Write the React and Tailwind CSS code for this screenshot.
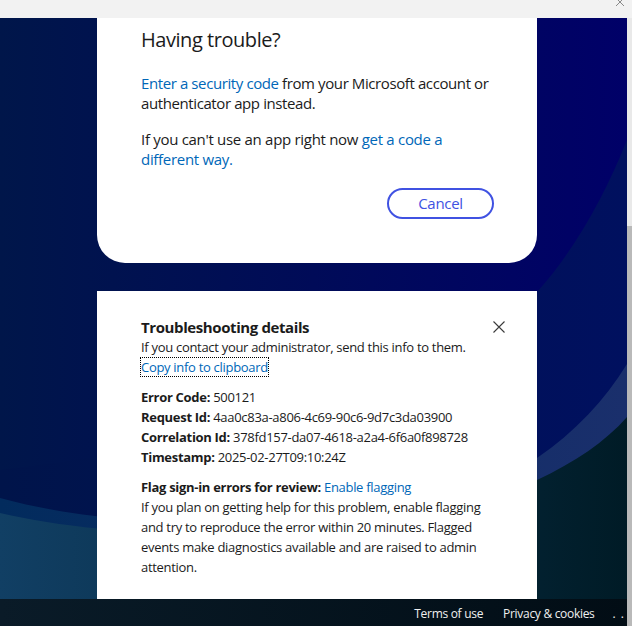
import React from 'react';

const FONT = "font-['Segoe_UI','Open_Sans',sans-serif]";

function Backdrop() {
  return (
    <svg
      className="absolute inset-0 w-full h-full"
      viewBox="0 18 627 608"
      preserveAspectRatio="none"
    >
      <defs>
        <linearGradient id="base" x1="0" x2="1" y1="0" y2="0">
          <stop offset="0" stopColor="#00164a" />
          <stop offset="0.5" stopColor="#000b58" />
          <stop offset="1" stopColor="#000068" />
        </linearGradient>
        <linearGradient id="sweep" x1="0" x2="1" y1="0" y2="0">
          <stop offset="0" stopColor="#00144a" />
          <stop offset="1" stopColor="#00105f" />
        </linearGradient>
        <linearGradient id="band" x1="0" x2="1" y1="0" y2="0">
          <stop offset="0" stopColor="#022b5d" />
          <stop offset="1" stopColor="#1a2f6c" />
        </linearGradient>
        <linearGradient id="floor" x1="0" x2="1" y1="0" y2="0">
          <stop offset="0" stopColor="#113f64" />
          <stop offset="0.6" stopColor="#062a40" />
          <stop offset="1" stopColor="#001b26" />
        </linearGradient>
      </defs>
      <rect x="0" y="18" width="627" height="608" fill="url(#base)" />
      <path d="M627 140 C605 195 575 250 537 292 C470 360 330 430 0 470 L0 626 L627 626 Z" fill="url(#sweep)" />
      <path d="M0 498 C150 540 420 530 537 458 C575 432 605 400 627 364 L627 626 L0 626 Z" fill="url(#band)" />
      <path d="M0 513 C150 548 400 540 537 480 C575 462 605 442 627 417 L627 626 L0 626 Z" fill="url(#floor)" />
    </svg>
  );
}

function Scrollbar() {
  return (
    <div className="w-[5px] shrink-0 flex flex-col">
      <div className="h-[208px] bg-[#e9e9e9]" />
      <div className="flex-1 bg-[#b9b9b9]" />
    </div>
  );
}

function Label({ children }) {
  return <span className="font-bold">{children}</span>;
}

export default function App() {
  return (
    <div className={`w-[632px] h-[626px] flex flex-col overflow-hidden text-[#1b1b1b] tracking-[-0.3px] ${FONT}`}>
      {/* window strip */}
      <div className="h-[18px] shrink-0 flex justify-end bg-[#f2f2f2] overflow-hidden">
        <svg className="-mt-[3px] mr-[7px]" width="10" height="10" viewBox="0 0 10 10">
          <path d="M1 1 L9 9 M9 1 L1 9" stroke="#8a8a8a" strokeWidth="1" />
        </svg>
      </div>

      <div className="flex-1 flex min-h-0">
        <div className="relative flex-1 flex flex-col min-w-0">
          <Backdrop />

          <main className="relative flex-1 flex flex-col pl-[97px] min-h-0">
            {/* having trouble card */}
            <section className="w-[440px] bg-white rounded-b-[28px] px-[44px] pt-[8px] pb-[44px]">
              <h1 className="text-[20px] leading-[28px] font-normal tracking-[-0.45px] mb-[19px]">Having trouble?</h1>
              <p className="text-[15px] leading-[20px] tracking-[-0.4px] whitespace-nowrap mb-[16px]">
                <a className="text-[#0067b8]">Enter a security code</a> from your Microsoft account or
                <br />
                authenticator app instead.
              </p>
              <p className="text-[15px] leading-[20px] whitespace-nowrap">
                If you can't use an app right now <a className="text-[#0067b8]">get a code a</a>
                <br />
                <a className="text-[#0067b8]">different way.</a>
              </p>
              <div className="flex justify-end mt-[19px] -mr-px">
                <button className="w-[107px] h-[31px] rounded-full border-2 border-[#4052e2] text-[#4052e2] text-[15px] leading-none">
                  Cancel
                </button>
              </div>
            </section>

            {/* troubleshooting card */}
            <section className="w-[440px] flex-1 mt-[28px] bg-white px-[44px] pt-[26px] text-[13px] leading-[20px] whitespace-nowrap">
              <div className="flex items-center justify-between -mr-[12px]">
                <h2 className="text-[15px] leading-[20px] font-bold tracking-[-0.4px]">Troubleshooting details</h2>
                <svg width="12" height="12" viewBox="0 0 12 12">
                  <path d="M0.5 0.5 L11.5 11.5 M11.5 0.5 L0.5 11.5" stroke="#3b3b3b" strokeWidth="1.1" />
                </svg>
              </div>
              <p>If you contact your administrator, send this info to them.</p>
              <p>
                <a className="inline-block leading-[18px] text-[#0067b8] outline-1 outline-dotted outline-black">
                  Copy info to clipboard
                </a>
              </p>

              <div className="mt-[10px]">
                <div><Label>Error Code:</Label> 500121</div>
                <div><Label>Request Id:</Label> 4aa0c83a-a806-4c69-90c6-9d7c3da03900</div>
                <div><Label>Correlation Id:</Label> 378fd157-da07-4618-a2a4-6f6a0f898728</div>
                <div><Label>Timestamp:</Label> 2025-02-27T09:10:24Z</div>
              </div>

              <div className="mt-[10px]">
                <div>
                  <Label>Flag sign-in errors for review:</Label>{' '}
                  <a className="text-[#0067b8]">Enable flagging</a>
                </div>
                <p>
                  If you plan on getting help for this problem, enable flagging
                  <br />
                  and try to reproduce the error within 20 minutes. Flagged
                  <br />
                  events make diagnostics available and are raised to admin
                  <br />
                  attention.
                </p>
              </div>
            </section>
          </main>

          <footer className="relative h-[27px] shrink-0 flex items-center justify-end gap-[20px] pt-[3px] overflow-hidden bg-linear-to-r from-[#0a1b28] to-[#020d15] text-[12px] text-[#f0f0f0]">
            <a>Terms of use</a>
            <a>Privacy &amp; cookies</a>
            <span className="-mr-[10px] -ml-[2px] tracking-[5px]">...</span>
          </footer>
        </div>

        <Scrollbar />
      </div>
    </div>
  );
}
